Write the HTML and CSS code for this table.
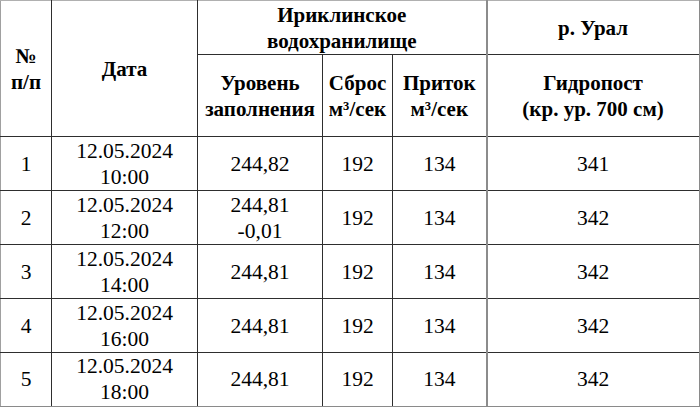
FILE: index.html
```html
<!DOCTYPE html>
<html lang="ru">
<head>
<meta charset="utf-8">
<title>Уровень воды</title>
<link rel="stylesheet" href="styles.css">
</head>
<body>
<table class="grid">
  <colgroup>
    <col class="c-num">
    <col class="c-date">
    <col class="c-level">
    <col class="c-out">
    <col class="c-in">
    <col class="c-post">
  </colgroup>
  <thead>
    <tr class="h1">
      <th rowspan="2" class="first">№<br>п/п</th>
      <th rowspan="2" class="date-h">Дата</th>
      <th colspan="3">Ириклинское<br>водохранилище</th>
      <th class="river">р. Урал</th>
    </tr>
    <tr class="h2">
      <th>Уровень<br>заполнения</th>
      <th>Сброс<br>м³/сек</th>
      <th>Приток<br>м³/сек</th>
      <th class="river">Гидропост<br>(кр. ур. 700 см)</th>
    </tr>
  </thead>
  <tbody>
    <tr><td class="first">1</td><td>12.05.2024<br>10:00</td><td>244,82</td><td>192</td><td>134</td><td class="river">341</td></tr>
    <tr><td class="first">2</td><td>12.05.2024<br>12:00</td><td>244,81<br>-0,01</td><td>192</td><td>134</td><td class="river">342</td></tr>
    <tr><td class="first">3</td><td>12.05.2024<br>14:00</td><td>244,81</td><td>192</td><td>134</td><td class="river">342</td></tr>
    <tr><td class="first">4</td><td>12.05.2024<br>16:00</td><td>244,81</td><td>192</td><td>134</td><td class="river">342</td></tr>
    <tr><td class="first">5</td><td>12.05.2024<br>18:00</td><td>244,81</td><td>192</td><td>134</td><td class="river">342</td></tr>
  </tbody>
</table>
</body>
</html>
```

FILE: styles.css
```css
html, body {
  margin: 0;
  padding: 0;
  background: #ffffff;
}

.grid {
  border-collapse: collapse;
  table-layout: fixed;
  width: 700px;
  font-family: "Times New Roman", "Liberation Serif", "Tinos", serif;
  font-size: 21.5px;
  line-height: 26px;
  color: #000;
  border-top: 1px solid #b0b0b0;
  border-left: 1px solid #a0a0a0;
  border-right: 2px solid #8a8a8a;
  border-bottom: 2px solid #8a8a8a;
}

.c-num { width: 51px; }
.c-date { width: 146px; }
.c-level { width: 125px; }
.c-out { width: 70px; }
.c-in { width: 94px; }
.c-post { width: 213px; }

.grid th,
.grid td {
  border: 1px solid #2e2e2e;
  padding: 0;
  text-align: center;
  vertical-align: middle;
  white-space: nowrap;
  font-family: "Times New Roman", "Liberation Serif", "Tinos", serif;
}

.grid th {
  font-weight: bold;
  font-size: 21px;
}

.grid .first {
  border-left: 1px solid #a0a0a0;
}

.grid .river {
  border-left: 2px solid #8c8c8c;
  border-right: 2px solid #8a8a8a;
}

.h1 th {
  border-top: 1px solid #b0b0b0;
}

.h1 { height: 54px; }
.h2 { height: 82px; }
.grid tbody tr { height: 54px; }

.date-h {
  padding-top: 4px;
}

.grid tbody tr:last-child td {
  border-bottom: 2px solid #8a8a8a;
}
```
